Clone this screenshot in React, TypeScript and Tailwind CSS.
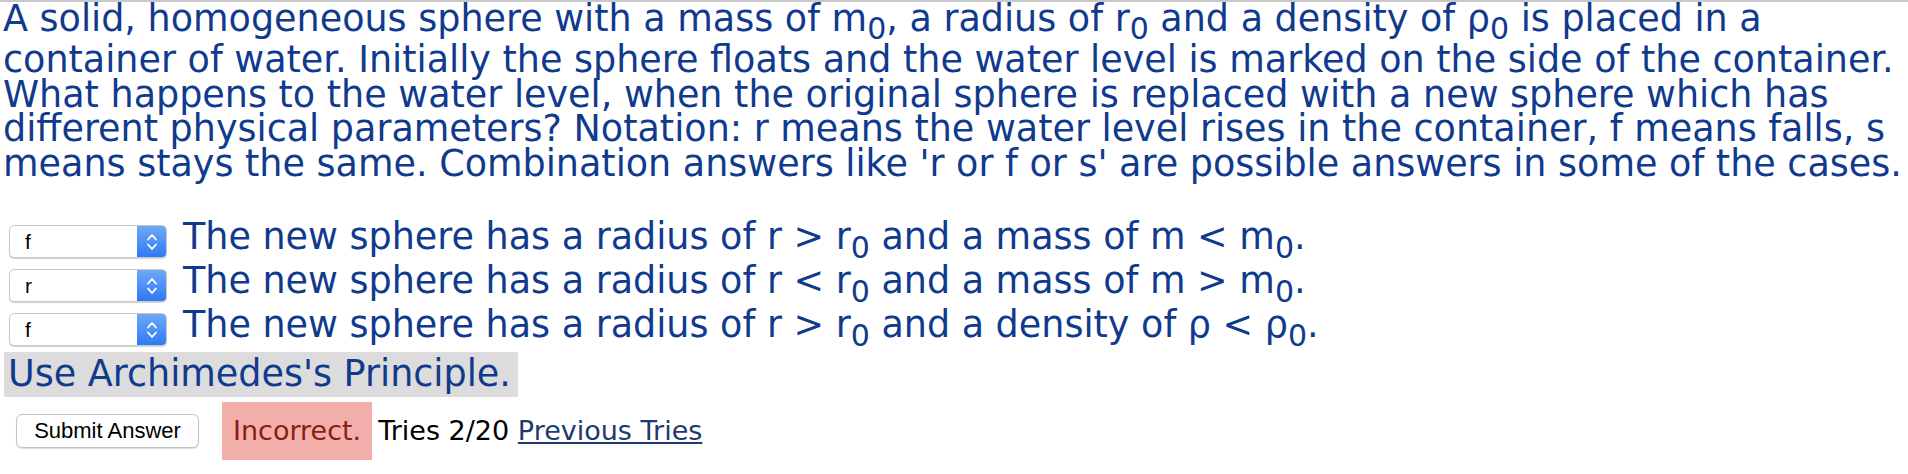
import React from "react";

function S({ children }: { children: React.ReactNode }) {
  return (
    <sub className="align-sub bottom-0 text-[30px] leading-[29px]">{children}</sub>
  );
}

function Chevrons() {
  return (
    <svg width="14" height="22" viewBox="0 0 14 22" fill="none">
      <path d="M3 8.5 L7 4 L11 8.5" stroke="white" strokeWidth="1.8" strokeLinecap="round" strokeLinejoin="round" />
      <path d="M3 13.5 L7 18 L11 13.5" stroke="white" strokeWidth="1.8" strokeLinecap="round" strokeLinejoin="round" />
    </svg>
  );
}

function FakeSelect({ value }: { value: string }) {
  return (
    <div className="mt-[6px] ml-[9px] flex h-[33px] w-[158px] shrink-0 overflow-hidden rounded-[5px] border border-[#c9c9c9] bg-white shadow-[0_1px_1px_rgba(0,0,0,0.18)]">
      <div className="flex flex-1 items-center pl-[15px] font-['Liberation_Sans',Arial,sans-serif] text-[21px] leading-none text-black">
        {value}
      </div>
      <div className="flex w-[29px] items-center justify-center bg-gradient-to-b from-[#6fa8f7] to-[#2c79f5]">
        <Chevrons />
      </div>
    </div>
  );
}

function Row({ value, children }: { value: string; children: React.ReactNode }) {
  return (
    <div className="flex h-[44px] items-start">
      <FakeSelect value={value} />
      <span className="ml-[16px] mt-[1px] block whitespace-nowrap">{children}</span>
    </div>
  );
}

export default function App() {
  return (
    <div className="h-[474px] w-[1908px] overflow-hidden border-t-2 border-[#c8c8c8] bg-white font-['DejaVu_Sans',Verdana,sans-serif] text-[36.5px] leading-[34.5px] text-[#0f3a8e]">
      <p className="pl-[3px]">
        A solid, homogeneous sphere with a mass of m<S>0</S>, a radius of r<S>0</S> and a density of ρ<S>0</S> is placed in a
        container of water. Initially the sphere floats and the water level is marked on the side of the container. What
        happens to the water level, when the original sphere is replaced with a new sphere which has different physical
        parameters? Notation: r means the water level rises in the container, f means falls, s means stays the same.
        Combination answers like 'r or f or s' are possible answers in some of the cases.
      </p>
      <div className="mt-[38px]">
        <Row value="f">
          The new sphere has a radius of r &gt; r<S>0</S> and a mass of m &lt; m<S>0</S>.
        </Row>
        <Row value="r">
          The new sphere has a radius of r &lt; r<S>0</S> and a mass of m &gt; m<S>0</S>.
        </Row>
        <Row value="f">
          The new sphere has a radius of r &gt; r<S>0</S> and a density of ρ &lt; ρ<S>0</S>.
        </Row>
      </div>
      <div className="ml-[4px] mt-[1px] w-fit bg-[#dcdcdc] py-[5px] pl-[4px] pr-[7px]">Use Archimedes's Principle.</div>
      <div className="mt-[5px] flex items-center text-[27px] leading-none">
        <button className="ml-[16px] h-[34px] w-[183px] rounded-[6px] border border-[#c4c4c4] bg-white font-['Liberation_Sans',Arial,sans-serif] text-[22px] text-black shadow-[0_1px_1px_rgba(0,0,0,0.15)]">
          Submit Answer
        </button>
        <div className="ml-[23px] flex h-[58px] items-center bg-[#f2aeab] px-[11px] text-[#8b1c12]">Incorrect.</div>
        <div className="ml-[6px] whitespace-nowrap text-black">
          Tries 2/20{" "}
          <a href="#" className="text-[#1d3a6e] underline">
            Previous Tries
          </a>
        </div>
      </div>
    </div>
  );
}
